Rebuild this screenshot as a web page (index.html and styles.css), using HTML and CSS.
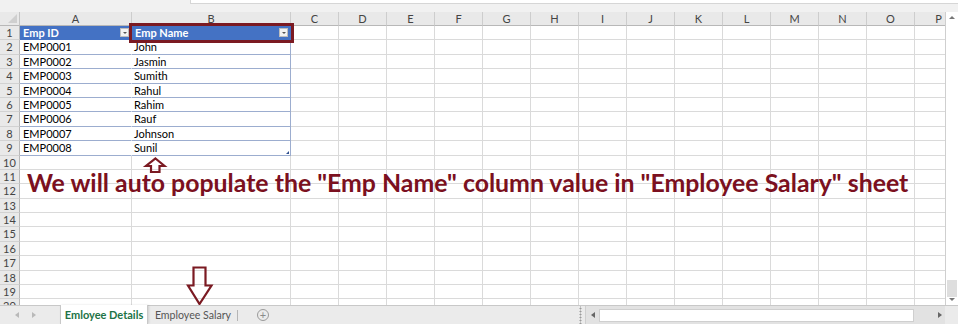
FILE: index.html
```html
<!DOCTYPE html>
<html lang="en">
<head>
<meta charset="utf-8">
<title>Emloyee Details</title>
<link rel="stylesheet" href="styles.css">
</head>
<body>
<div class="top"><div class="fx"></div></div>
<div class="main">
  <div class="sheet">
    <div class="grid">
      <div class="corner"></div><div class="ch">A</div><div class="ch">B</div><div class="ch">C</div><div class="ch">D</div><div class="ch">E</div><div class="ch">F</div><div class="ch">G</div><div class="ch">H</div><div class="ch">I</div><div class="ch">J</div><div class="ch">K</div><div class="ch">L</div><div class="ch">M</div><div class="ch">N</div><div class="ch">O</div><div class="ch">P</div>
      <div class="rh">1</div><div class="th">Emp ID<span class="dd"></span></div><div class="th sel">Emp Name<span class="dd"></span></div><div></div><div></div><div></div><div></div><div></div><div></div><div></div><div></div><div></div><div></div><div></div><div></div><div></div><div></div>
      <div class="rh">2</div><div class="td">EMP0001</div><div class="td tb">John</div><div></div><div></div><div></div><div></div><div></div><div></div><div></div><div></div><div></div><div></div><div></div><div></div><div></div><div></div>
      <div class="rh">3</div><div class="td">EMP0002</div><div class="td tb">Jasmin</div><div></div><div></div><div></div><div></div><div></div><div></div><div></div><div></div><div></div><div></div><div></div><div></div><div></div><div></div>
      <div class="rh">4</div><div class="td">EMP0003</div><div class="td tb">Sumith</div><div></div><div></div><div></div><div></div><div></div><div></div><div></div><div></div><div></div><div></div><div></div><div></div><div></div><div></div>
      <div class="rh">5</div><div class="td">EMP0004</div><div class="td tb">Rahul</div><div></div><div></div><div></div><div></div><div></div><div></div><div></div><div></div><div></div><div></div><div></div><div></div><div></div><div></div>
      <div class="rh">6</div><div class="td">EMP0005</div><div class="td tb">Rahim</div><div></div><div></div><div></div><div></div><div></div><div></div><div></div><div></div><div></div><div></div><div></div><div></div><div></div><div></div>
      <div class="rh">7</div><div class="td">EMP0006</div><div class="td tb">Rauf</div><div></div><div></div><div></div><div></div><div></div><div></div><div></div><div></div><div></div><div></div><div></div><div></div><div></div><div></div>
      <div class="rh">8</div><div class="td">EMP0007</div><div class="td tb">Johnson</div><div></div><div></div><div></div><div></div><div></div><div></div><div></div><div></div><div></div><div></div><div></div><div></div><div></div><div></div>
      <div class="rh">9</div><div class="td">EMP0008</div><div class="td tb end">Sunil</div><div></div><div></div><div></div><div></div><div></div><div></div><div></div><div></div><div></div><div></div><div></div><div></div><div></div><div></div>
      <div class="rh">10</div><div></div><div></div><div></div><div></div><div></div><div></div><div></div><div></div><div></div><div></div><div></div><div></div><div></div><div></div><div></div><div></div>
      <div class="rh">11</div><div></div><div></div><div></div><div></div><div></div><div></div><div></div><div></div><div></div><div></div><div></div><div></div><div></div><div></div><div></div><div></div>
      <div class="rh">12</div><div></div><div></div><div></div><div></div><div></div><div></div><div></div><div></div><div></div><div></div><div></div><div></div><div></div><div></div><div></div><div></div>
      <div class="rh">13</div><div></div><div></div><div></div><div></div><div></div><div></div><div></div><div></div><div></div><div></div><div></div><div></div><div></div><div></div><div></div><div></div>
      <div class="rh">14</div><div></div><div></div><div></div><div></div><div></div><div></div><div></div><div></div><div></div><div></div><div></div><div></div><div></div><div></div><div></div><div></div>
      <div class="rh">15</div><div></div><div></div><div></div><div></div><div></div><div></div><div></div><div></div><div></div><div></div><div></div><div></div><div></div><div></div><div></div><div></div>
      <div class="rh">16</div><div></div><div></div><div></div><div></div><div></div><div></div><div></div><div></div><div></div><div></div><div></div><div></div><div></div><div></div><div></div><div></div>
      <div class="rh">17</div><div></div><div></div><div></div><div></div><div></div><div></div><div></div><div></div><div></div><div></div><div></div><div></div><div></div><div></div><div></div><div></div>
      <div class="rh">18</div><div></div><div></div><div></div><div></div><div></div><div></div><div></div><div></div><div></div><div></div><div></div><div></div><div></div><div></div><div></div><div></div>
      <div class="rh">19</div><div></div><div></div><div></div><div></div><div></div><div></div><div></div><div></div><div></div><div></div><div></div><div></div><div></div><div></div><div></div><div></div>
      <div class="rh">20</div><div></div><div></div><div></div><div></div><div></div><div></div><div></div><div></div><div></div><div></div><div></div><div></div><div></div><div></div><div></div><div></div>
    </div>
    <div class="note">We will auto populate the "Emp Name" column value in "Employee Salary" sheet</div>
    <svg class="arrows" width="945" height="293" viewBox="0 12 945 293">
      <polygon points="155.5,158.5 164.5,166 159.5,166 159.5,172 151,172 151,166 146,166"/>
      <polygon points="193.5,267.5 205.5,267.5 205.5,285.5 211.5,285.5 199.5,304 188,285.5 193.5,285.5"/>
    </svg>
  </div>
  <div class="vscroll">
    <span class="vup"></span>
    <span class="vthumb"></span>
    <span class="vdown"></span>
  </div>
</div>
<div class="tabs">
  <div class="nav"><span class="tri-l"></span><span class="tri-r"></span></div>
  <div class="tab active">Emloyee Details</div>
  <div class="tab">Employee Salary</div>
  <div class="add">+</div>
  <div class="spacer"></div>
  <div class="split"></div>
  <div class="hscroll">
    <span class="tri-l dark"></span>
    <span class="hthumb"></span>
    <span class="tri-r dark"></span>
  </div>
  <div class="sbcorner"></div>
</div>
</body>
</html>
```

FILE: styles.css
```css
* { box-sizing: border-box; }
html, body { margin: 0; padding: 0; }
body {
  width: 958px;
  height: 324px;
  overflow: hidden;
  background: #f1f1f1;
  font-family: Lato, "Open Sans", sans-serif;
  color: #000;
}

.top { height: 12px; background: #f1f1f1; }
.fx { margin-left: 190px; height: 4px; background: #fff; border-bottom: 1px solid #d6d6d6; border-left: 1px solid #d6d6d6; }

.main { display: flex; height: 293px; }
.sheet { position: relative; width: 945px; height: 293px; overflow: hidden; background: #fff; }

.grid {
  display: grid;
  grid-template-columns: 20px 112px 159px repeat(14, 48px);
  grid-template-rows: 14px repeat(20, 14.4px);
  font-size: 11px;
}
.grid > div { border-right: 1px solid #dadada; border-bottom: 1px solid #dadada; white-space: nowrap; }

.grid > .corner { background: #e9e9e9; border-right-color: #c4c4c4; border-bottom-color: #b8b8b8; position: relative; }
.corner::after {
  content: "";
  position: absolute;
  right: 2px;
  bottom: 2px;
  border-left: 9px solid transparent;
  border-bottom: 9px solid #cfcfcf;
}
.grid > .ch {
  background: #e9e9e9;
  color: #444;
  text-align: center;
  line-height: 13px;
  border-right-color: #cdcdcd;
  border-bottom-color: #b8b8b8;
}
.grid > .rh {
  background: #e9e9e9;
  color: #444;
  text-align: center;
  line-height: 14px;
  border-right-color: #b8b8b8;
  border-bottom-color: #d2d2d2;
}
.grid > .th {
  position: relative;
  background: #4472c4;
  color: #fff;
  font-weight: 700;
  padding-left: 3px;
  line-height: 14px;
  border-right-color: #4472c4;
  border-bottom-color: #4472c4;
}
.dd {
  position: absolute;
  right: 2px;
  top: 2px;
  width: 9px;
  height: 9px;
  background: #f2f2f2;
  border: 1px solid #bdbdbd;
}
.dd::after {
  content: "";
  position: absolute;
  left: 2px;
  top: 3px;
  border-left: 2px solid transparent;
  border-right: 2px solid transparent;
  border-top: 2px solid #555;
}
.grid > .sel { outline: 3px solid #7b1a22; outline-offset: 0; z-index: 1; }
.grid > .td {
  background: #fff;
  padding-left: 3px;
  line-height: 14px;
  border-right-color: #fff;
  border-bottom-color: #9cadcf;
}
.grid > .tb { padding-left: 2px; border-right-color: #9cadcf; position: relative; }
.end::after {
  content: "";
  position: absolute;
  right: 1px;
  bottom: 1px;
  border-left: 3px solid transparent;
  border-bottom: 3px solid #2f4f8f;
}

.note {
  position: absolute;
  left: 27px;
  top: 158px;
  font-size: 24.85px;
  line-height: 25px;
  font-weight: 700;
  color: #7b1020;
  white-space: nowrap;
}
.arrows { position: absolute; left: 0; top: 0; pointer-events: none; }
.arrows polygon { fill: none; stroke: #7b1a22; stroke-width: 2.2; stroke-linejoin: miter; }

.vscroll {
  position: relative;
  width: 13px;
  height: 293px;
  background: #fff;
  border-left: 1px solid #cfcfcf;
}
.vup, .vdown { position: absolute; left: 3px; width: 0; height: 0; border-left: 3px solid transparent; border-right: 3px solid transparent; }
.vup { top: 4px; border-bottom: 3px solid #777; }
.vdown { bottom: 4px; border-top: 3px solid #777; }
.vthumb { position: absolute; left: 1px; right: 1px; top: 268px; height: 17px; background: #dedede; }

.tabs {
  display: flex;
  align-items: stretch;
  height: 19px;
  background: #ebebeb;
  border-top: 1px solid #c8c8c8;
  font-size: 11px;
}
.nav { width: 60px; display: flex; align-items: center; gap: 13px; padding-left: 15px; }
.tri-l, .tri-r { width: 0; height: 0; border-top: 3px solid transparent; border-bottom: 3px solid transparent; }
.tri-l { border-right: 4px solid #b9b9b9; }
.tri-r { border-left: 4px solid #b9b9b9; }
.tri-l.dark { border-right-color: #666; }
.tri-r.dark { border-left-color: #666; }
.tab { width: 90px; display: flex; align-items: center; justify-content: center; color: #555; position: relative; font-size: 10.6px; }
.tab::after { content: ""; position: absolute; right: 0; top: 4px; bottom: 3px; width: 1px; background: #b5b5b5; }
.tab.active {
  width: 88px;
  background: #fff;
  color: #217346;
  font-weight: 700;
  font-size: 11px;
  margin-top: -1px;
  border-left: 1px solid #c8c8c8;
  border-right: 1px solid #c8c8c8;
  box-shadow: 1px 0 2px rgba(0,0,0,0.12);
}
.tab.active::after { display: none; }
.add {
  width: 12px;
  height: 12px;
  margin: 3px 0 0 19px;
  border: 1px solid #9a9a9a;
  border-radius: 50%;
  color: #8a8a8a;
  font-size: 11px;
  line-height: 9px;
  text-align: center;
}
.spacer { flex: 1; }
.split {
  width: 10px;
  background: radial-gradient(circle, #9a9a9a 0.8px, transparent 1.2px) 4px 4px / 3px 3px repeat-y;
}
.hscroll {
  width: 360px;
  display: flex;
  align-items: center;
  padding: 0 3px 0 5px;
  background: #e2e2e2;
  border-left: 1px solid #cfcfcf;
}
.hthumb { width: 315px; height: 13px; margin: 0 24px 0 4px; background: #fff; border: 1px solid #cfcfcf; }
.sbcorner { width: 13px; background: #ebebeb; }
```
